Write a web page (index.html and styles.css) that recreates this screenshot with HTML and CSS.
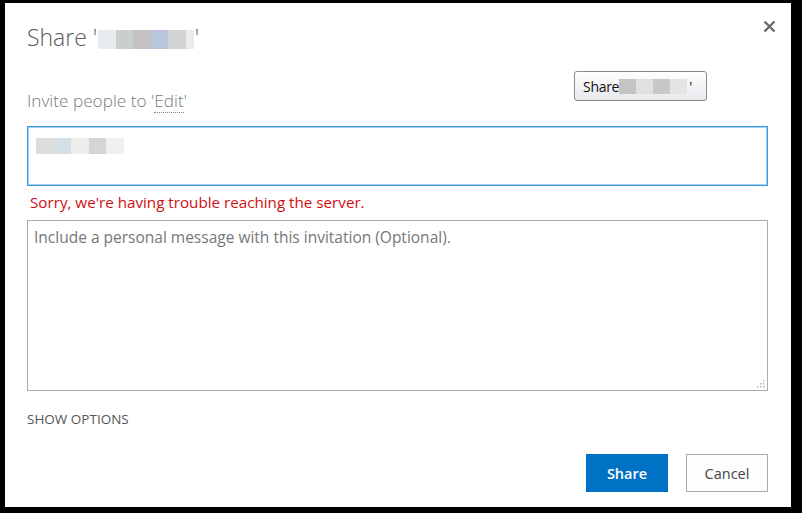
FILE: index.html
```html
<!DOCTYPE html>
<html>
<head>
<meta charset="utf-8">
<link rel="stylesheet" href="styles.css">
</head>
<body>
<div class="dialog">
  <div class="titlebar">
    <h1 class="title">Share '<span class="blur blur-title"><i class="b1"></i><i class="b2"></i><i class="b3"></i><i class="b4"></i><i class="b5"></i><i class="b6"></i></span>'</h1>
    <button class="close" aria-label="Close">
      <svg width="13" height="13" viewBox="0 0 13 13"><path d="M1.5 1.5 L11.5 11.5 M11.5 1.5 L1.5 11.5" stroke="#6a6a6a" stroke-width="2.4" stroke-linecap="butt"/></svg>
    </button>
  </div>
  <div class="tooltip">Share<span class="blur blur-tip"><i class="t1"></i><i class="t2"></i><i class="t3"></i><i class="t4"></i></span><span class="tip-tail">'</span></div>
  <div class="invite">Invite people to '<span class="edit">Edit</span>'</div>
  <div class="people">
    <span class="blur blur-input"><i class="p1"></i><i class="p2"></i><i class="p3"></i><i class="p4"></i><i class="p5"></i></span>
  </div>
  <div class="error">Sorry, we're having trouble reaching the server.</div>
  <div class="message">
    <span class="placeholder">Include a personal message with this invitation (Optional).</span>
    <svg class="grip" width="9" height="9" viewBox="0 0 9 9"><g fill="#b8b8b8"><rect x="7" y="1" width="1.5" height="1.5"/><rect x="4" y="4" width="1.5" height="1.5"/><rect x="7" y="4" width="1.5" height="1.5"/><rect x="1" y="7" width="1.5" height="1.5"/><rect x="4" y="7" width="1.5" height="1.5"/><rect x="7" y="7" width="1.5" height="1.5"/></g></svg>
  </div>
  <div class="options">SHOW OPTIONS</div>
  <div class="actions">
    <button class="btn primary">Share</button>
    <button class="btn secondary">Cancel</button>
  </div>
</div>
</body>
</html>
```

FILE: styles.css
```css
html, body {
  margin: 0;
  padding: 0;
  background: #000;
  height: 513px;
  overflow: hidden;
}
body {
  padding: 3px 11px 6px 5px;
  box-sizing: border-box;
  font-family: "Open Sans", "Noto Sans", sans-serif;
}
.dialog {
  position: relative;
  background: #fff;
  height: 504px;
  box-sizing: border-box;
  padding: 0 23px 0 22px;
}
.titlebar {
  display: flex;
  justify-content: space-between;
  align-items: flex-start;
  padding-top: 19px;
}
.title {
  margin: 0;
  font-size: 23px;
  font-weight: 300;
  color: #5a5a5a;
  line-height: 30px;
  display: flex;
  align-items: center;
}
.blur { display: inline-flex; }
.blur i { display: block; }
.blur-title { height: 19px; margin: 4px 1px 0 1px; }
.blur-title i { width: 17.5px; height: 19px; }
.blur-title .b1 { background: #e8ecf0; }
.blur-title .b2 { background: #c8d0ce; }
.blur-title .b3 { background: #c4c2c4; }
.blur-title .b4 { background: #b9c5dc; }
.blur-title .b5 { background: #d4d4d4; }
.blur-title .b6 { background: #ebebeb; width: 8px; }
.close {
  border: 0;
  background: none;
  padding: 0;
  margin: -2px -8px 0 0;
  width: 13px;
  height: 13px;
  line-height: 0;
}
.tooltip {
  position: absolute;
  left: 569px;
  top: 68px;
  width: 133px;
  height: 30px;
  box-sizing: border-box;
  border: 1px solid #8a8a8a;
  border-radius: 3px;
  background: linear-gradient(#ffffff, #e8e8ee);
  font-size: 14px;
  color: #111;
  display: flex;
  align-items: center;
  padding-left: 8px;
  letter-spacing: -0.3px;
}
.blur-tip i { width: 17px; height: 15px; }
.blur-tip .t1 { background: #c4c4c4; }
.blur-tip .t2 { background: #e0e0e0; }
.blur-tip .t3 { background: #c8c8c8; }
.blur-tip .t4 { background: #e4e4e4; }
.tip-tail { margin-left: 2px; }
.invite {
  margin-top: 38px;
  font-size: 17.2px;
  font-weight: 300;
  color: #7a7a7a;
  line-height: 22px;
}
.edit {
  border-bottom: 1px dotted #888;
}
.people {
  margin-top: 14px;
  height: 60px;
  box-sizing: border-box;
  border: 1px solid #3a98e0;
  box-shadow: inset 0 0 0 1px #a9d2f2;
  padding: 10px 8px;
}
.blur-input i { width: 17.6px; height: 16px; }
.blur-input .p1 { background: #dcdcdc; }
.blur-input .p2 { background: #d3dfe5; }
.blur-input .p3 { background: #ececea; }
.blur-input .p4 { background: #d6d4d7; }
.blur-input .p5 { background: #f0f0f2; }
.error {
  margin-top: 6px;
  font-size: 15.2px;
  line-height: 20px;
  color: #d00f12;
  padding-left: 3px;
}
.message {
  position: relative;
  margin-top: 8px;
  height: 171px;
  box-sizing: border-box;
  border: 1px solid #ababab;
  padding: 5px 6px;
}
.placeholder {
  font-size: 15.5px;
  line-height: 20px;
  color: #777;
}
.grip {
  position: absolute;
  right: 2px;
  bottom: 2px;
}
.options {
  margin-top: 19px;
  font-size: 13.5px;
  line-height: 18px;
  color: #555;
}
.actions {
  display: flex;
  justify-content: flex-end;
  gap: 18px;
  margin-top: 26px;
}
.btn {
  width: 82px;
  height: 38px;
  box-sizing: border-box;
  font-family: "Open Sans", "Noto Sans", sans-serif;
  font-size: 14.5px;
  padding: 0;
}
.primary {
  background: #0072c6;
  border: 1px solid #0072c6;
  color: #fff;
  font-weight: 600;
}
.secondary {
  background: #fdfdfd;
  border: 1px solid #ababab;
  color: #444;
}
```
